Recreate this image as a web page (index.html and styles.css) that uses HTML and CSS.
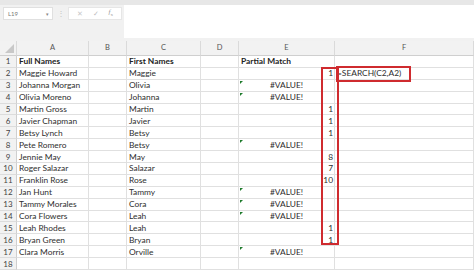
FILE: index.html
```html
<!DOCTYPE html>
<html>
<head>
<meta charset="utf-8">
<link rel="stylesheet" href="styles.css">
</head>
<body>
<div class="app">
  <div class="toolbar">
    <div class="left">
      <div class="namebox"><span class="ref">L19</span><span class="caret">&#9662;</span></div>
      <div class="dots">&#8942;</div>
      <div class="btns">
        <span class="btn x">&#10005;</span>
        <span class="btn ok">&#10003;</span>
        <span class="btn fx"><i>f</i><sub>x</sub></span>
      </div>
    </div>
    <div class="formula"></div>
  </div>
  <div class="sheet">
    <div class="hd corner"><svg width="9" height="9" viewBox="0 0 9 9"><path d="M9 0 L9 9 L0 9 Z" fill="#c8c8c8"/></svg></div>
    <div class="hd">A</div><div class="hd">B</div><div class="hd">C</div><div class="hd">D</div><div class="hd">E</div><div class="hd">F</div>

    <div class="rn">1</div><div class="c b">Full Names</div><div class="c"></div><div class="c b">First Names</div><div class="c"></div><div class="c b">Partial Match</div><div class="c"></div>
    <div class="rn">2</div><div class="c">Maggie Howard</div><div class="c"></div><div class="c">Maggie</div><div class="c"></div><div class="c n">1</div><div class="c f">=SEARCH(C2,A2)</div>
    <div class="rn">3</div><div class="c">Johanna Morgan</div><div class="c"></div><div class="c">Olivia</div><div class="c"></div><div class="c e">#VALUE!</div><div class="c"></div>
    <div class="rn">4</div><div class="c">Olivia Moreno</div><div class="c"></div><div class="c">Johanna</div><div class="c"></div><div class="c e">#VALUE!</div><div class="c"></div>
    <div class="rn">5</div><div class="c">Martin Gross</div><div class="c"></div><div class="c">Martin</div><div class="c"></div><div class="c n">1</div><div class="c"></div>
    <div class="rn">6</div><div class="c">Javier Chapman</div><div class="c"></div><div class="c">Javier</div><div class="c"></div><div class="c n">1</div><div class="c"></div>
    <div class="rn">7</div><div class="c">Betsy Lynch</div><div class="c"></div><div class="c">Betsy</div><div class="c"></div><div class="c n">1</div><div class="c"></div>
    <div class="rn">8</div><div class="c">Pete Romero</div><div class="c"></div><div class="c">Betsy</div><div class="c"></div><div class="c e">#VALUE!</div><div class="c"></div>
    <div class="rn">9</div><div class="c">Jennie May</div><div class="c"></div><div class="c">May</div><div class="c"></div><div class="c n">8</div><div class="c"></div>
    <div class="rn">10</div><div class="c">Roger Salazar</div><div class="c"></div><div class="c">Salazar</div><div class="c"></div><div class="c n">7</div><div class="c"></div>
    <div class="rn">11</div><div class="c">Franklin Rose</div><div class="c"></div><div class="c">Rose</div><div class="c"></div><div class="c n">10</div><div class="c"></div>
    <div class="rn">12</div><div class="c">Jan Hunt</div><div class="c"></div><div class="c">Tammy</div><div class="c"></div><div class="c e">#VALUE!</div><div class="c"></div>
    <div class="rn">13</div><div class="c">Tammy Morales</div><div class="c"></div><div class="c">Cora</div><div class="c"></div><div class="c e">#VALUE!</div><div class="c"></div>
    <div class="rn">14</div><div class="c">Cora Flowers</div><div class="c"></div><div class="c">Leah</div><div class="c"></div><div class="c e">#VALUE!</div><div class="c"></div>
    <div class="rn">15</div><div class="c">Leah Rhodes</div><div class="c"></div><div class="c">Leah</div><div class="c"></div><div class="c n">1</div><div class="c"></div>
    <div class="rn">16</div><div class="c">Bryan Green</div><div class="c"></div><div class="c">Bryan</div><div class="c"></div><div class="c n">1</div><div class="c"></div>
    <div class="rn">17</div><div class="c">Clara Morris</div><div class="c"></div><div class="c">Orville</div><div class="c"></div><div class="c e">#VALUE!</div><div class="c"></div>
    <div class="rn">18</div><div class="c"></div><div class="c"></div><div class="c"></div><div class="c"></div><div class="c"></div><div class="c"></div>

    <div class="hl hl-col"></div>
    <div class="hl hl-cell"></div>
  </div>
</div>
</body>
</html>
```
FILE: styles.css
```css
* { box-sizing: border-box; }
html, body { margin: 0; padding: 0; }
body {
  width: 474px;
  height: 270px;
  overflow: hidden;
  background: #ffffff;
  font-family: "Lato", "Liberation Sans", sans-serif;
  color: #2e2e2e;
}
.app { width: 474px; height: 270px; display: flex; flex-direction: column; }

.toolbar {
  height: 41px;
  display: flex;
  background: #f1f1f1;
  border-top: 5px solid #e7e7e7;
}
.left {
  width: 124px;
  display: flex;
  align-items: flex-start;
  padding: 2px 0 0 3px;
}
.namebox {
  width: 50px;
  height: 13px;
  background: #ffffff;
  border: 1px solid #e0e0e0;
  display: flex;
  align-items: center;
  justify-content: space-between;
  padding: 0 3px 0 4px;
  font-size: 6px;
  color: #777;
}
.caret { font-size: 5px; color: #888; }
.dots { width: 15px; text-align: center; font-size: 8px; color: #c4c4c4; line-height: 13px; }
.btns {
  width: 54px;
  height: 13px;
  background: #ffffff;
  border: 1px solid #e6e6e6;
  display: flex;
  align-items: center;
  justify-content: space-around;
  padding: 0 3px;
}
.btn { font-size: 7px; color: #c8c8c8; line-height: 1; }
.btn.ok { color: #bdbdbd; }
.btn.fx { color: #999; font-family: "Liberation Serif", serif; font-size: 7px; }
.btn.fx sub { font-size: 5px; }
.formula {
  flex: 1;
  height: 33px;
  background: #ffffff;
}

.sheet {
  position: relative;
  display: grid;
  grid-template-columns: 17px 72px 38px 74px 38px 96px 139px;
  grid-template-rows: 15px repeat(18, 11.9px);
  font-size: 8.4px;
}
.hd {
  background: #f2f2f2;
  border-right: 1px solid #dadada;
  border-bottom: 1px solid #cfcfcf;
  color: #555;
  font-size: 7.5px;
  display: flex;
  align-items: center;
  justify-content: center;
}
.corner { justify-content: flex-end; align-items: flex-end; padding: 0 2px 2px 0; }
.rn {
  background: #f2f2f2;
  border-right: 1px solid #cfcfcf;
  border-bottom: 1px solid #dcdcdc;
  color: #444;
  display: flex;
  align-items: center;
  justify-content: center;
  font-size: 8px;
}
.c {
  position: relative;
  border-right: 1px solid #e0e0e0;
  border-bottom: 1px solid #e0e0e0;
  display: flex;
  align-items: center;
  padding: 0 2px;
  white-space: nowrap;
  overflow: visible;
}
.b { font-weight: 700; color: #222; }
.n { justify-content: flex-end; padding-right: 1px; }
.e { justify-content: center; }
.e::before {
  content: "";
  position: absolute;
  left: 1px;
  top: 1px;
  border-top: 3px solid #1e7b2c;
  border-right: 3px solid transparent;
}
.f { padding-left: 2px; z-index: 1; }

.hl { position: absolute; border: 2px solid #cf2b2f; pointer-events: none; z-index: 2; }
.hl-col { left: 321px; top: 26px; width: 18px; height: 178px; }
.hl-cell { left: 336px; top: 25px; width: 75px; height: 16px; }
```
